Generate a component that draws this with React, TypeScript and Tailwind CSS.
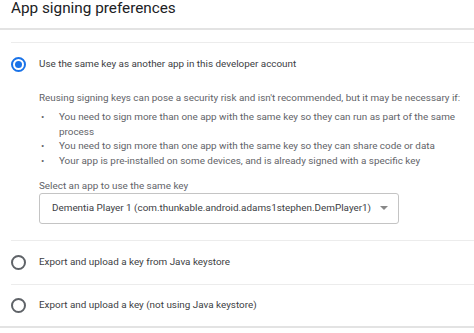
import React from 'react';

function Radio({ checked }: { checked?: boolean }) {
  return (
    <span
      className={
        'flex h-[15px] w-[15px] items-center justify-center rounded-full border-2 ' +
        (checked ? 'border-[#1a73e8]' : 'border-[#5f6368]')
      }
    >
      {checked && <span className="h-[7px] w-[7px] rounded-full bg-[#1a73e8]" />}
    </span>
  );
}

export default function App() {
  return (
    <div
      className="h-[333px] w-[474px] overflow-hidden bg-white text-[#3c4043]"
      style={{ fontFamily: 'Roboto, "Liberation Sans", sans-serif' }}
    >
      {/* header */}
      <div className="flex h-[30px] items-end border-b-2 border-[#e3e3e3] pb-[11px] pl-[11px]">
        <h1 className="text-[15.3px] leading-[18px] text-[#202124]">App signing preferences</h1>
      </div>

      <div className="mt-[12px] pl-[11px]">
        {/* option 1 */}
        <div className="border-t border-[#ececec]">
          <div className="flex h-[42px] items-center">
            <span className="w-[28px]">
              <Radio checked />
            </span>
            <span className="text-[9.9px] leading-[14px]">
              Use the same key as another app in this developer account
            </span>
          </div>

          <div className="pl-[28px] pb-[16px] text-[9.9px] leading-[14px] text-[#5f6368]">
            <p className="mt-[6px] whitespace-nowrap">
              Reusing signing keys can pose a security risk and isn't recommended, but it may be necessary if:
            </p>
            <ul className="mt-[5px] pr-[12px] leading-[14.7px]">
              <li className="flex">
                <span className="w-[20px] shrink-0 pl-[2px]">•</span>
                <span>You need to sign more than one app with the same key so they can run as part of the same process</span>
              </li>
              <li className="flex">
                <span className="w-[20px] shrink-0 pl-[2px]">•</span>
                <span>You need to sign more than one app with the same key so they can share code or data</span>
              </li>
              <li className="flex">
                <span className="w-[20px] shrink-0 pl-[2px]">•</span>
                <span>Your app is pre-installed on some devices, and is already signed with a specific key</span>
              </li>
            </ul>
            <p className="mt-[10px]">Select an app to use the same key</p>
            <div className="flex h-[31px] w-[360px] items-center rounded-[3px] border border-[#c4c4c4] pl-[12px] text-[#3c4043]">
              <span className="whitespace-nowrap">Dementia Player 1 (com.thunkable.android.adams1stephen.DemPlayer1)</span>
              <svg className="ml-[9px] shrink-0" width="8" height="4" viewBox="0 0 8 4">
                <path d="M0 0 L8 0 L4 4 Z" fill="#888" />
              </svg>
            </div>
          </div>
        </div>

        {/* option 2 */}
        <div className="flex h-[44px] items-center border-t border-[#ececec]">
          <span className="w-[28px]">
            <Radio />
          </span>
          <span className="text-[9.9px] leading-[14px]">Export and upload a key from Java keystore</span>
        </div>

        {/* option 3 */}
        <div className="flex h-[42px] items-center border-t border-[#ececec]">
          <span className="w-[28px]">
            <Radio />
          </span>
          <span className="text-[9.9px] leading-[14px]">Export and upload a key (not using Java keystore)</span>
        </div>
      </div>
      <div className="h-[2px] bg-[#e3e3e3]" />
    </div>
  );
}
